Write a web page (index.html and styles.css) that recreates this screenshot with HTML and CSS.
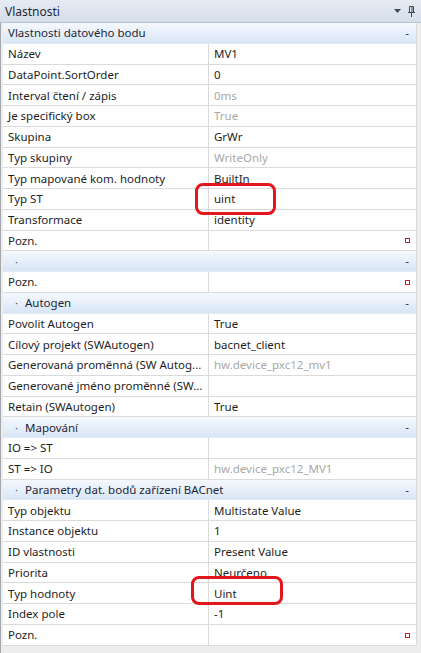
FILE: index.html
```html
<!DOCTYPE html>
<html>
<head>
<meta charset="utf-8">
<link rel="stylesheet" href="styles.css">
</head>
<body>
<div class="panel">
  <div class="titlebar">
    <span class="title">Vlastnosti</span>
    <span class="tools">
      <svg class="ico-drop" width="8" height="5" viewBox="0 0 8 5"><path d="M0 0H7L3.5 4Z" fill="#3c4a5c"/></svg>
      <svg class="ico-pin" width="7" height="11" viewBox="0 0 7 11"><path d="M1.5 0.5H5.5V6.5H1.5Z" fill="none" stroke="#3c4a5c"/><path d="M4 1V6" stroke="#3c4a5c"/><path d="M0 6.5H7" stroke="#3c4a5c"/><path d="M3.5 7V11" stroke="#3c4a5c"/></svg>
    </span>
  </div>
  <div class="grid">
    <div class="group"><span class="gname">Vlastnosti datového bodu</span><span class="minus">-</span></div>
    <div class="row"><div class="name">Název</div><div class="val">MV1</div></div>
    <div class="row"><div class="name">DataPoint.SortOrder</div><div class="val">0</div></div>
    <div class="row"><div class="name">Interval čtení / zápis</div><div class="val ro">0ms</div></div>
    <div class="row"><div class="name">Je specifický box</div><div class="val ro">True</div></div>
    <div class="row"><div class="name">Skupina</div><div class="val">GrWr</div></div>
    <div class="row"><div class="name">Typ skupiny</div><div class="val ro">WriteOnly</div></div>
    <div class="row"><div class="name">Typ mapované kom. hodnoty</div><div class="val">BuiltIn</div></div>
    <div class="row"><div class="name">Typ ST</div><div class="val">uint<span class="mark mark1"></span></div></div>
    <div class="row"><div class="name">Transformace</div><div class="val">identity</div></div>
    <div class="row"><div class="name">Pozn.</div><div class="val"><span class="note"></span></div></div>
    <div class="group"><span class="dot">·</span><span class="minus">-</span></div>
    <div class="row"><div class="name">Pozn.</div><div class="val"><span class="note"></span></div></div>
    <div class="group"><span class="dot">·</span><span class="gname">Autogen</span><span class="minus">-</span></div>
    <div class="row"><div class="name">Povolit Autogen</div><div class="val">True</div></div>
    <div class="row"><div class="name">Cílový projekt (SWAutogen)</div><div class="val">bacnet_client</div></div>
    <div class="row"><div class="name">Generovaná proměnná (SW Autog...</div><div class="val ro">hw.device_pxc12_mv1</div></div>
    <div class="row"><div class="name">Generované jméno proměnné (SW...</div><div class="val"></div></div>
    <div class="row"><div class="name">Retain (SWAutogen)</div><div class="val">True</div></div>
    <div class="group"><span class="dot">·</span><span class="gname">Mapování</span><span class="minus">-</span></div>
    <div class="row"><div class="name">IO =&gt; ST</div><div class="val"></div></div>
    <div class="row"><div class="name">ST =&gt; IO</div><div class="val ro">hw.device_pxc12_MV1</div></div>
    <div class="group"><span class="dot">·</span><span class="gname">Parametry dat. bodů zařízení BACnet</span><span class="minus">-</span></div>
    <div class="row"><div class="name">Typ objektu</div><div class="val">Multistate Value</div></div>
    <div class="row"><div class="name">Instance objektu</div><div class="val">1</div></div>
    <div class="row"><div class="name">ID vlastnosti</div><div class="val">Present Value</div></div>
    <div class="row"><div class="name">Priorita</div><div class="val">Neurčeno</div></div>
    <div class="row"><div class="name">Typ hodnoty</div><div class="val">Uint<span class="mark mark2"></span></div></div>
    <div class="row"><div class="name">Index pole</div><div class="val">-1</div></div>
    <div class="row"><div class="name">Pozn.</div><div class="val"><span class="note"></span></div></div>
  </div>
</div>
</body>
</html>
```

FILE: styles.css
```css
html, body {
  margin: 0;
  padding: 0;
}
body {
  width: 421px;
  height: 653px;
  overflow: hidden;
  background: #ededed;
  font-family: "Noto Sans", "Open Sans", sans-serif;
  font-size: 11.5px;
  color: #1e1e1e;
}
.panel {
  height: 653px;
  display: flex;
  flex-direction: column;
  border-left: 1px solid #a3a7ae;
  background: #ededed;
}
.titlebar {
  height: 22px;
  border-bottom: 1px solid #b9c2cf;
  background: linear-gradient(#e6ebf3, #d5deea);
  display: flex;
  align-items: center;
  justify-content: space-between;
  padding: 0 6px 0 5px;
  margin-left: -1px;
}
.title {
  color: #1e2838;
  font-size: 12px;
}
.tools {
  display: flex;
  align-items: center;
  gap: 6px;
}
.ico-drop { margin-top: 1px; }
.grid {
  margin-left: 2px;
  width: 413px;
  background: #fff;
  border-right: 1px solid #dcdcdc;
}
.row, .group {
  box-sizing: border-box;
  height: 20.75px;
  border-bottom: 1px solid #dadada;
  display: flex;
  align-items: center;
}
.group {
  background: linear-gradient(#f6f9fd, #d8e5f6);
  border-bottom: 1px solid #e4ebf3;
  padding-left: 5px;
  position: relative;
  color: #1e2838;
}
.dot {
  display: inline-block;
  width: 17px;
  text-align: center;
  color: #505a68;
}
.minus {
  position: absolute;
  right: 7px;
  top: 2px;
  color: #333;
}
.name {
  width: 206px;
  padding-left: 5px;
  box-sizing: border-box;
  height: 100%;
  display: flex;
  align-items: center;
  border-right: 1px solid #dadada;
  white-space: nowrap;
  overflow: hidden;
}
.val {
  flex: 1;
  padding-left: 5px;
  height: 100%;
  display: flex;
  align-items: center;
  position: relative;
}
.val.ro {
  color: #a8a8a8;
}
.note {
  position: absolute;
  right: 6px;
  top: 50%;
  margin-top: -2px;
  width: 3px;
  height: 3px;
  border: 1.5px solid #c0202a;
}
.mark {
  position: absolute;
  border: 3px solid #e3161e;
  border-radius: 8px;
  box-sizing: border-box;
}
.mark1 {
  left: -14px;
  top: -6px;
  width: 81px;
  height: 32px;
}
.mark2 {
  left: -18px;
  top: -7px;
  width: 92px;
  height: 29px;
}
```
